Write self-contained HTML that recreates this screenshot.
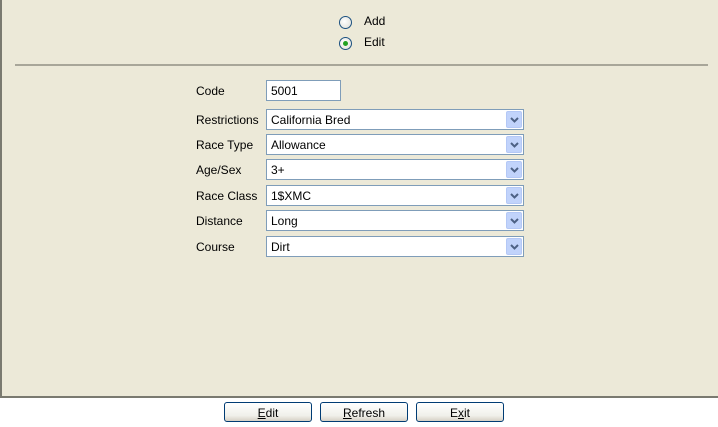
<!DOCTYPE html>
<html><head><style>
*{box-sizing:border-box;margin:0;padding:0}
body{width:718px;height:427px;background:#fff;font-family:"Liberation Sans",Arial,sans-serif;font-size:12px;color:#000;position:relative;overflow:hidden}
.main{position:absolute;left:0;top:0;width:718px;height:398px;background:#ECE9D8;border-left:2px solid #7a7a70;border-bottom:2px solid #7a7a70}
.sep{position:absolute;left:15px;top:64px;width:693px;height:2px;background:#a8a699}
.radio{position:absolute;width:13px;height:13px;border:1px solid #1c5180;border-radius:50%;background:radial-gradient(circle at 40% 40%,#fff,#dcdcd4)}
.dot{position:absolute;left:3px;top:3px;width:5px;height:5px;border-radius:50%;background:#21a121}
.t{position:absolute}
.lbl{position:absolute;left:196px}
.inp{position:absolute;left:266px;height:21px;border:1px solid #7f9db9;background:#fff;padding:3px 0 0 4px}
.sel{width:258px}
.arr{position:absolute;right:1px;top:1px;width:16px;height:17px;background:#c1d3fb;border:1px solid #b4c8f6;border-radius:2px}
.arr svg{position:absolute;left:3px;top:5px}
.btn{position:absolute;top:402px;width:88px;height:20px;border:1px solid #003c74;border-radius:3px;background:linear-gradient(#fff,#f0f0ea 70%,#d6d0c5);text-align:center;padding-top:3px}
</style></head><body>
<div class="main"></div>
<div class="sep"></div>
<div class="radio" style="left:339px;top:16px"></div>
<div class="t" style="left:364px;top:14px">Add</div>
<div class="radio" style="left:339px;top:37px"><div class="dot"></div></div>
<div class="t" style="left:364px;top:35px">Edit</div>

<div class="lbl" style="top:84px">Code</div>
<div class="inp" style="top:80px;width:75px">5001</div>

<div class="lbl" style="top:113px">Restrictions</div>
<div class="inp sel" style="top:109px">California Bred<div class="arr"><svg width="9" height="6"><path d="M1 1l3.5 3.5L8 1" stroke="#4d6185" stroke-width="2" fill="none"/></svg></div></div>
<div class="lbl" style="top:138px">Race Type</div>
<div class="inp sel" style="top:134px">Allowance<div class="arr"><svg width="9" height="6"><path d="M1 1l3.5 3.5L8 1" stroke="#4d6185" stroke-width="2" fill="none"/></svg></div></div>
<div class="lbl" style="top:163px">Age/Sex</div>
<div class="inp sel" style="top:159px">3+<div class="arr"><svg width="9" height="6"><path d="M1 1l3.5 3.5L8 1" stroke="#4d6185" stroke-width="2" fill="none"/></svg></div></div>
<div class="lbl" style="top:189px">Race Class</div>
<div class="inp sel" style="top:185px">1$XMC<div class="arr"><svg width="9" height="6"><path d="M1 1l3.5 3.5L8 1" stroke="#4d6185" stroke-width="2" fill="none"/></svg></div></div>
<div class="lbl" style="top:214px">Distance</div>
<div class="inp sel" style="top:210px">Long<div class="arr"><svg width="9" height="6"><path d="M1 1l3.5 3.5L8 1" stroke="#4d6185" stroke-width="2" fill="none"/></svg></div></div>
<div class="lbl" style="top:240px">Course</div>
<div class="inp sel" style="top:236px">Dirt<div class="arr"><svg width="9" height="6"><path d="M1 1l3.5 3.5L8 1" stroke="#4d6185" stroke-width="2" fill="none"/></svg></div></div>

<div class="btn" style="left:224px"><u>E</u>dit</div>
<div class="btn" style="left:320px"><u>R</u>efresh</div>
<div class="btn" style="left:416px">E<u>x</u>it</div>
</body></html>
